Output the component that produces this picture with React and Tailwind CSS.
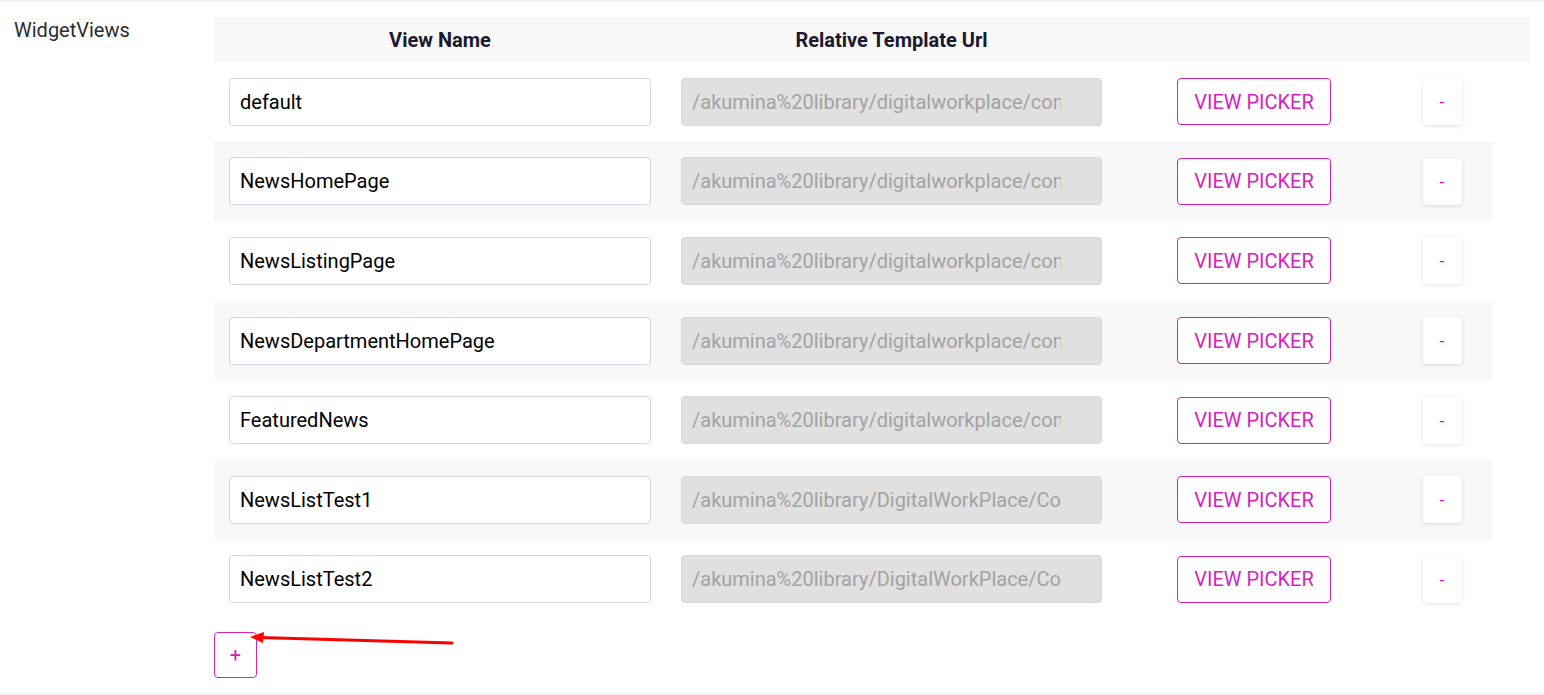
import React from "react";

const views = [
  { name: "default", url: "/akumina%20library/digitalworkplace/content/templates/default.html" },
  { name: "NewsHomePage", url: "/akumina%20library/digitalworkplace/content/templates/news/home.html" },
  { name: "NewsListingPage", url: "/akumina%20library/digitalworkplace/content/templates/news/listing.html" },
  { name: "NewsDepartmentHomePage", url: "/akumina%20library/digitalworkplace/content/templates/news/department.html" },
  { name: "FeaturedNews", url: "/akumina%20library/digitalworkplace/content/templates/news/featured.html" },
  { name: "NewsListTest1", url: "/akumina%20library/DigitalWorkPlace/Content/Templates/News/test1.html" },
  { name: "NewsListTest2", url: "/akumina%20library/DigitalWorkPlace/Content/Templates/News/test2.html" },
];

const Row = ({ view, striped }) => (
  <div
    className={`grid grid-cols-[452px_451px_274px_102px] h-[79.6px] items-center ${
      striped ? "bg-[#f8f8f8]" : "bg-white"
    }`}
  >
    <div className="px-[15px]">
      <input
        defaultValue={view.name}
        className="w-full h-[48px] rounded-[4px] border border-[#d6d6e0] bg-white pl-[10px] pr-[10px] text-[20px] text-black outline-none"
      />
    </div>
    <div className="px-[15px]">
      <input
        disabled
        value={view.url}
        readOnly
        className="w-full h-[48px] rounded-[4px] border border-[#d6d6e0] bg-[#e0e0e0] pl-[10px] pr-[40px] text-[20px] text-[#a3a3a3] outline-none"
      />
    </div>
    <div className="flex justify-center">
      <button className="w-[154px] h-[47px] rounded-[4px] border border-[#d423b8] bg-white text-[20px] text-[#d81ec0] uppercase">
        View Picker
      </button>
    </div>
    <div className="flex justify-center">
      <button className="w-[39px] h-[47px] rounded-[4px] bg-white text-[18px] text-[#d81ec0] shadow-[0_1px_4px_rgba(0,0,0,0.12)]">
        -
      </button>
    </div>
  </div>
);

export default function App() {
  return (
    <div className="w-[1544px] h-[695px] bg-white overflow-hidden flex flex-col" style={{ fontFamily: "Roboto, 'Noto Sans', sans-serif" }}>
      <div className="h-[2px] bg-[#f3f3f3]" />
      <div className="flex-1 flex pt-[15px]">
        <div className="w-[214px] shrink-0 pl-[14px]">
          <div className="text-[20px] leading-[26px] text-[#2b2b33]">WidgetViews</div>
        </div>
        <div className="relative flex-1">
          <div className="w-[1316px] h-[45px] bg-[#f8f8f8] grid grid-cols-[452px_451px_274px_139px] items-center">
            <div className="text-center text-[20px] font-bold text-[#1b1930]">View Name</div>
            <div className="text-center text-[20px] font-bold text-[#1b1930]">Relative Template Url</div>
            <div />
            <div />
          </div>
          <div className="w-[1279px]">
            {views.map((v, i) => (
              <Row key={v.name} view={v} striped={i % 2 === 1} />
            ))}
          </div>
          <div className="pt-[13px]">
            <button className="w-[43px] h-[46px] rounded-[4px] border border-[#d423b8] bg-white text-[20px] text-[#d81ec0]">
              +
            </button>
          </div>
          {/* annotation arrow */}
          <svg className="absolute pointer-events-none" width="260" height="40" style={{ left: 0, top: 595 }} viewBox="0 0 260 40">
            <line x1="238" y1="31" x2="46" y2="25.5" stroke="#ff0000" strokeWidth="3" strokeLinecap="round" />
            <polygon points="36,25 50,20 49,31" fill="#ff0000" />
          </svg>
        </div>
      </div>
      <div className="h-[2px] bg-[#f3f3f3]" />
    </div>
  );
}
